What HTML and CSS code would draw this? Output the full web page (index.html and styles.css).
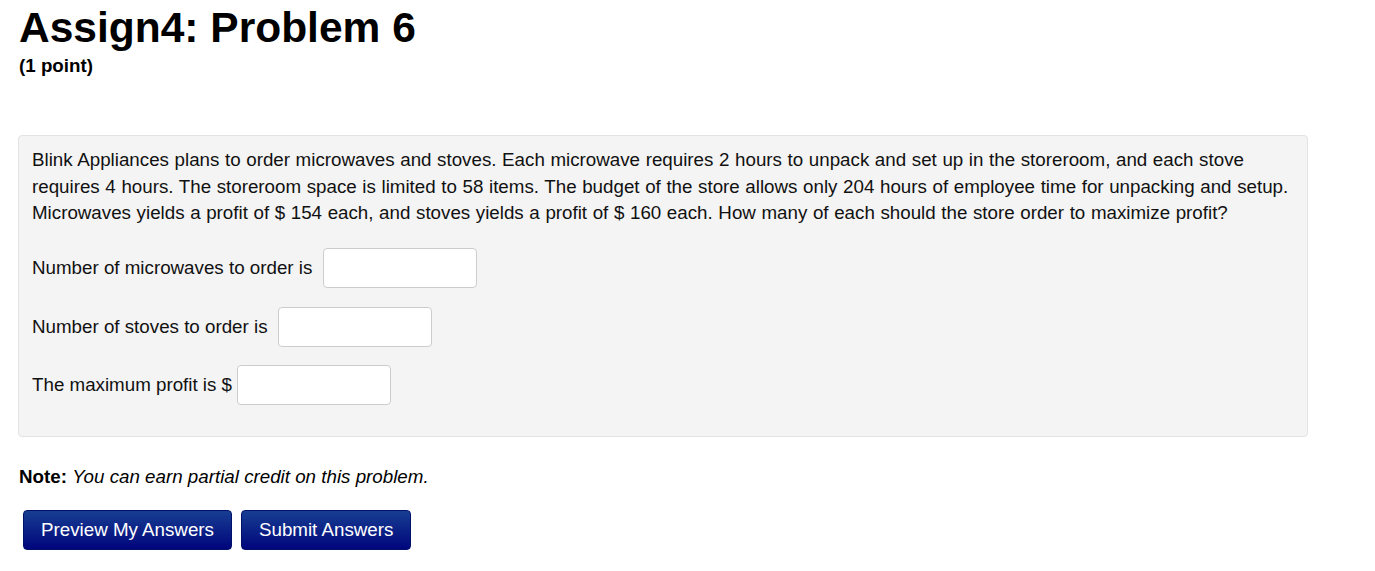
FILE: index.html
```html
<!DOCTYPE html>
<html lang="en">

<head>
    <meta charset="UTF-8">
    <meta name="viewport" content="width=device-width, initial-scale=1.0">
    <title>Assign4: Problem 6</title>
    <link rel="stylesheet" href="styles.css">
</head>

<body>

    <div class="page">
        <h1>Assign4: Problem 6</h1>
        <p class="points">(1 point)</p>

        <div class="problem">
            <p class="statement">Blink Appliances plans to order microwaves and stoves. Each microwave requires 2 hours to unpack and set up in the storeroom, and each stove requires 4 hours. The storeroom space is limited to 58 items. The budget of the store allows only 204 hours of employee time for unpacking and setup. Microwaves yields a profit of $ 154 each, and stoves yields a profit of $ 160 each. How many of each should the store order to maximize profit?</p>
            <div class="answer-row first">Number of microwaves to order is <input type="text" class="answer"></div>
            <div class="answer-row">Number of stoves to order is <input type="text" class="answer"></div>
            <div class="answer-row">The maximum profit is $<input type="text" class="answer"></div>
        </div>

        <p class="note"><strong>Note:</strong> <em>You can earn partial credit on this problem.</em></p>

        <div class="button-group">
            <button>Preview My Answers</button>
            <button>Submit Answers</button>
        </div>
    </div>

</body>

</html>
```

FILE: styles.css
```css
/* General Body Styling */
body {
    font-family: 'Liberation Sans', Arial, sans-serif;
    font-size: 18.75px;
    margin: 0;
    padding: 0;
    color: #000000;
    background: #ffffff;
}

.page {
    padding: 4px 0 0 18px;
    width: 1290px;
}

/* Title Styling */
h1 {
    font-size: 42.5px;
    line-height: 48px;
    font-weight: bold;
    margin: 0 0 0 1px;
}

.points {
    font-weight: bold;
    line-height: 22px;
    margin: 3px 0 0 1px;
}

/* Problem Box */
.problem {
    margin-top: 58px;
    background-color: #f4f4f4;
    border: 1px solid #e3e3e3;
    border-radius: 4px;
    padding: 11px 13px 31px 13px;
}

.statement {
    margin: 0;
    line-height: 26.5px;
    color: #111111;
    word-spacing: 0.4px;
}

.answer-row {
    margin-top: 18.5px;
    height: 40px;
    line-height: 40px;
    color: #111111;
}

.answer-row.first {
    margin-top: 21.5px;
}

.answer {
    box-sizing: border-box;
    width: 154px;
    height: 40px;
    margin-left: 5px;
    vertical-align: top;
    border: 1px solid #cccccc;
    border-radius: 4px;
    background: #ffffff;
    font-family: inherit;
    font-size: 18.75px;
    padding: 4px 8px;
}

.note {
    margin: 27px 0 0 1px;
    line-height: 26px;
}

.note em {
    font-style: italic;
}

/* Button Styling */
.button-group {
    display: flex;
    gap: 9px;
    margin: 20px 0 0 5px;
}

button {
    height: 40px;
    padding: 0 17px;
    background: linear-gradient(to bottom, #173e92, #00057c);
    border: 1px solid #00116a;
    border-radius: 4px;
    color: #ffffff;
    font-family: inherit;
    font-size: 18.75px;
    cursor: pointer;
}

button:hover {
    background: #00057c;
}
```
